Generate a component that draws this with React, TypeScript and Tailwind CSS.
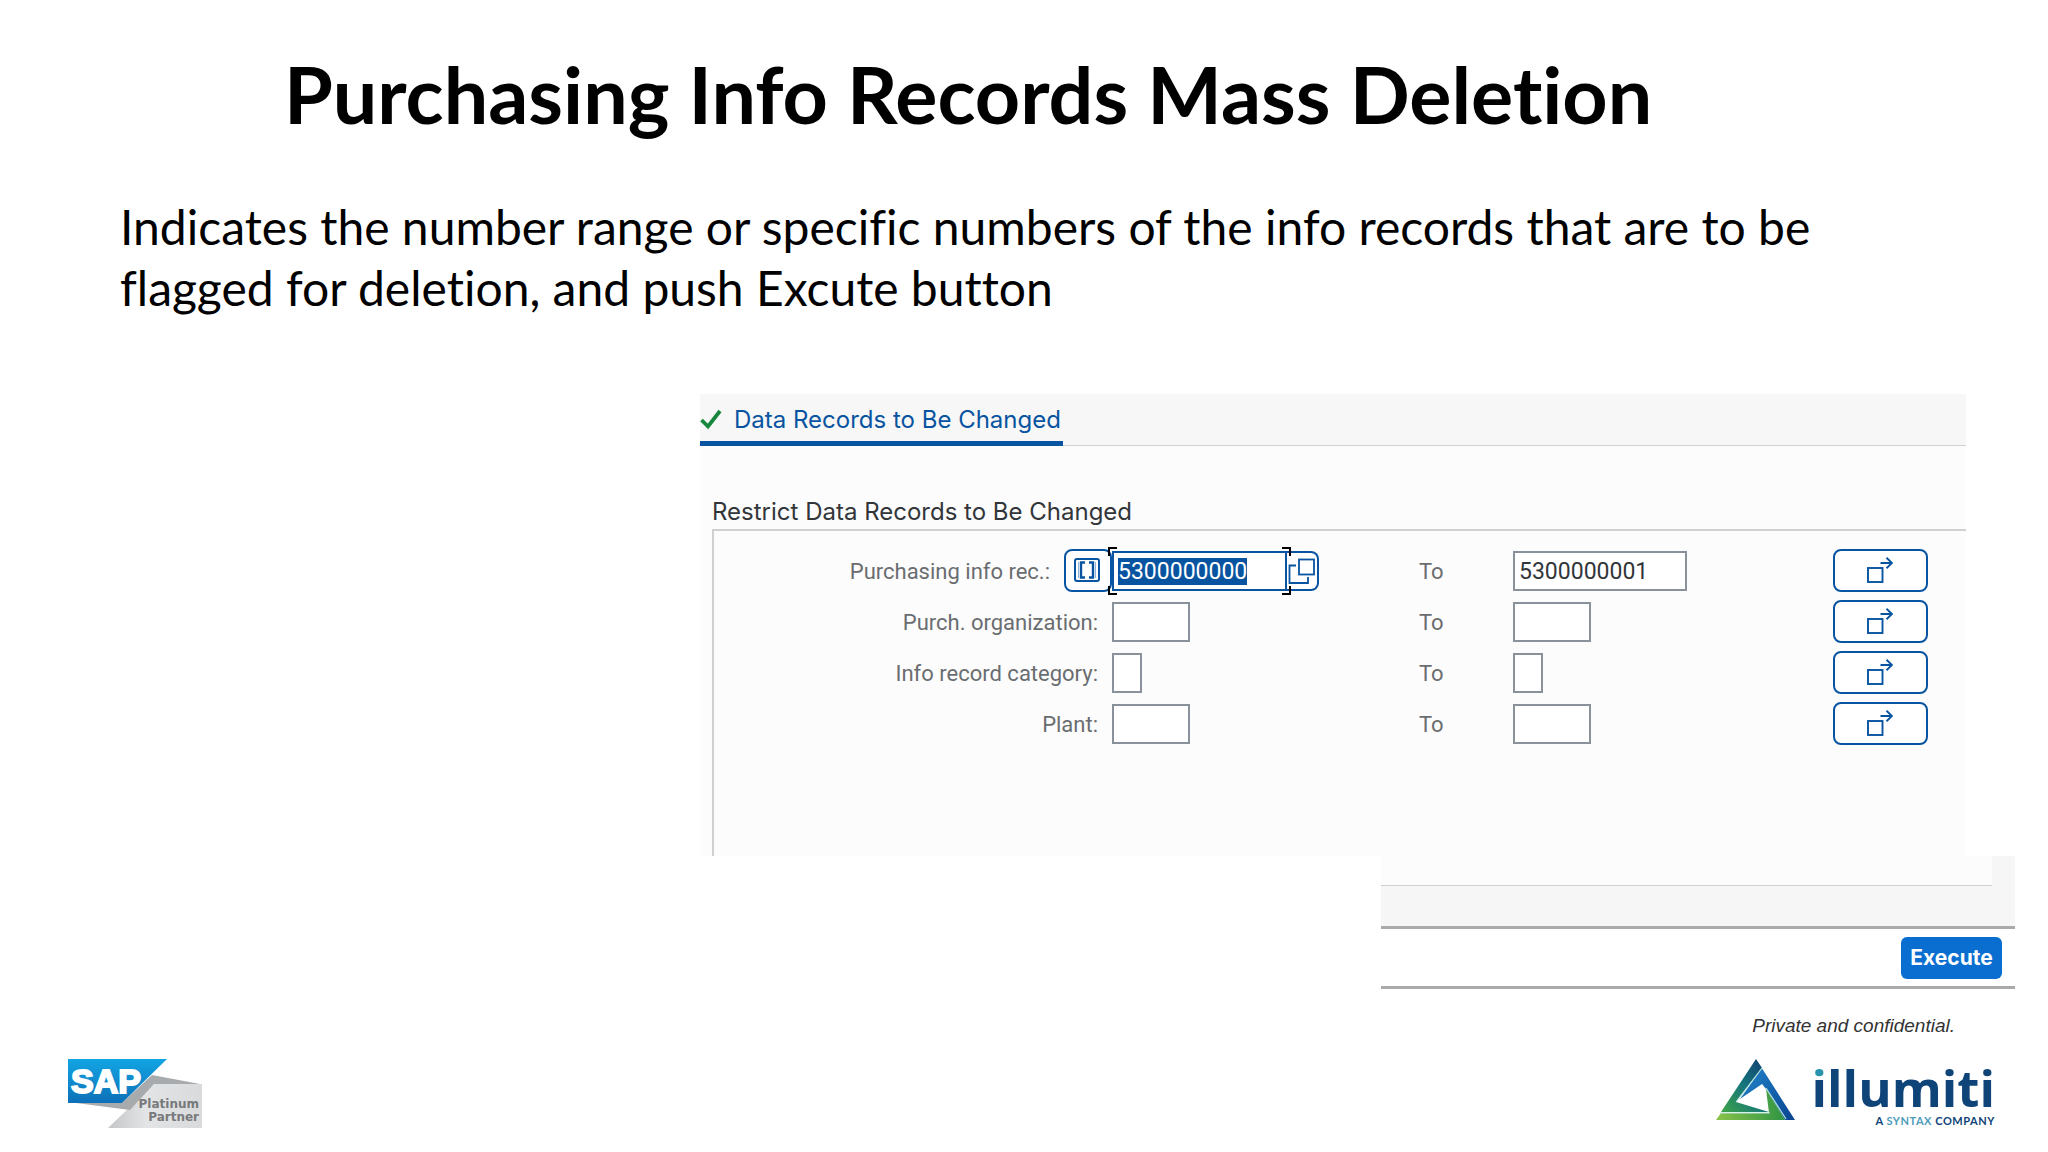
import React, { useEffect, useRef } from "react";

const rows = [
  { id: "info-rec", label: "Purchasing info rec.:", width: "w-[174px]", to: "5300000001" },
  { id: "org", label: "Purch. organization:", width: "w-[78px]", to: "" },
  { id: "category", label: "Info record category:", width: "w-[30px]", to: "" },
  { id: "plant", label: "Plant:", width: "w-[78px]", to: "" },
];

function CheckIcon() {
  return (
    <svg width="22" height="22" viewBox="0 0 22 22" fill="none">
      <path d="M1.5 11 8 17.5 20 2" stroke="#17873d" strokeWidth="3.8" />
    </svg>
  );
}

function BracketsIcon() {
  return (
    <svg width="26" height="24" viewBox="0 0 26 24" fill="none" stroke="#0854a0">
      <rect x="1" y="1" width="24" height="22" rx="2" strokeWidth="2" />
      <path d="M11 4.5H7V19.5H11M15 4.5H19V19.5H15" strokeWidth="2.4" />
      <path d="M4.5 4V20M21.5 4V20" stroke="#8fb4dc" strokeWidth="1" />
    </svg>
  );
}

function ValueHelpIcon() {
  return (
    <svg width="28" height="26" viewBox="0 0 28 26" fill="none" stroke="#0854a0" strokeWidth="1.8">
      <rect x="11" y="1.5" width="15" height="15" />
      <path d="M8 7.5H1.5V25H20V19" />
    </svg>
  );
}

function MultiSelectIcon() {
  return (
    <svg width="26" height="26" viewBox="0 0 26 26" fill="none" stroke="#0854a0" strokeWidth="1.9">
      <rect x="1" y="11" width="14.5" height="14" />
      <path d="M13.5 6H25M19.5 .8 25 6 19.5 11.2" />
    </svg>
  );
}

function RecordInput() {
  const inputRef = useRef<HTMLInputElement>(null);

  useEffect(() => {
    inputRef.current?.focus();
    inputRef.current?.select();
  }, []);

  return (
    <div className="flex items-center">
      <div className="relative">
        <input
          ref={inputRef}
          id="info-rec"
          defaultValue="5300000000"
          className="block h-10 w-[175px] border-2 border-[#0854a0] bg-white px-1 pt-0.5 text-[23px] leading-[26px] text-[#32363a] outline-none selection:bg-[#0854a0] selection:text-white"
        />
        <span className="absolute -left-1 -top-1 size-[9px] border-l-2 border-t-2 border-black" />
        <span className="absolute -bottom-1 -left-1 size-[9px] border-b-2 border-l-2 border-black" />
        <span className="absolute -right-1 -top-1 size-[9px] border-r-2 border-t-2 border-black" />
        <span className="absolute -bottom-1 -right-1 size-[9px] border-b-2 border-r-2 border-black" />
      </div>
      <button
        aria-label="Value help"
        className="flex h-10 w-8 items-center justify-center rounded-r-lg border-2 border-l-0 border-[#0854a0] bg-white"
      >
        <ValueHelpIcon />
      </button>
    </div>
  );
}

function SelectionForm() {
  return (
    <section className="ml-[700px] mr-[82px] h-[462px] bg-[#fcfcfc] font-['Roboto',sans-serif]">
      <div className="flex h-[52px] border-b border-[#d0d0d0] bg-[#f7f7f7]">
        <button className="flex h-[52px] items-center gap-3 border-b-[5px] border-[#0854a0] pt-1 pr-0.5 font-['Inter',sans-serif] text-[24px] text-[#0854a0]">
          <CheckIcon />
          Data Records to Be Changed
        </button>
      </div>
      <h2 className="ml-3 mt-[48px] h-[35px] font-['Inter',sans-serif] text-[24px] leading-[36px] text-[#32363a]">
        Restrict Data Records to Be Changed
      </h2>
      <div className="ml-3 flex h-[327px] flex-col gap-2 border-l-2 border-t-2 border-[#d0d0d0] pr-[38px] pt-[18px]">
        {rows.map((row, i) => (
          <div key={row.id} className="grid h-[43px] grid-cols-[398px_307px_94px_1fr_95px] items-center">
            <div className="flex items-center justify-end text-[22px] text-[#6a6d70]">
              <label htmlFor={row.id} className="pr-3.5 pt-0.5">
                {row.label}
              </label>
              {i === 0 && (
                <button
                  aria-label="Dynamic selection"
                  className="flex h-[43px] w-12 items-center justify-center rounded-lg border-2 border-[#0854a0] bg-white pb-0.5 pr-0.5"
                >
                  <BracketsIcon />
                </button>
              )}
            </div>
            {i === 0 ? (
              <RecordInput />
            ) : (
              <input id={row.id} className={`h-10 border-2 border-[#89919a] bg-white ${row.width}`} />
            )}
            <label htmlFor={`${row.id}-to`} className="pt-0.5 text-[22px] text-[#6a6d70]">
              To
            </label>
            <input
              id={`${row.id}-to`}
              defaultValue={row.to}
              className={`h-10 border-2 border-[#89919a] bg-white px-1 pt-0.5 text-[23px] text-[#32363a] ${row.width}`}
            />
            <button
              aria-label="Multiple selection"
              className="flex h-[43px] items-center justify-center rounded-lg border-2 border-[#0854a0] bg-white pb-0.5 pr-0.5"
            >
              <MultiSelectIcon />
            </button>
          </div>
        ))}
      </div>
    </section>
  );
}

function ExecuteBar() {
  return (
    <section className="ml-auto mr-[33px] w-[634px]">
      <div className="h-[70px] bg-[#f6f6f6] pr-[23px]">
        <div className="h-[30px] border-b border-[#d0d0d0] bg-[#fcfcfc]" />
      </div>
      <div className="flex h-[63px] items-center justify-end border-y-[3px] border-[#a9abab] pr-[13px]">
        <button className="h-[42px] w-[101px] rounded-md bg-[#0a6ed1] font-['Inter',sans-serif] text-[21px] font-bold text-white">
          Execute
        </button>
      </div>
    </section>
  );
}

function SapLogo() {
  return (
    <svg width="136" height="72" viewBox="0 0 136 72">
      <defs>
        <linearGradient id="sap" x1="0" y1="0" x2="0" y2="1">
          <stop offset="0" stopColor="#12a5e3" />
          <stop offset="1" stopColor="#0d70b8" />
        </linearGradient>
        <linearGradient id="platinum" x1="0" y1="0" x2="1" y2="0">
          <stop offset="0" stopColor="#c4c5c7" />
          <stop offset=".4" stopColor="#e3e4e5" />
          <stop offset="1" stopColor="#d9dadc" />
        </linearGradient>
      </defs>
      <path d="M40 70 86 26H134V70Z" fill="url(#platinum)" />
      <path d="M84 17 132 26H86L62 52 8 45H54Z" fill="#a8abad" />
      <path d="M0 1H99L54 45H0Z" fill="url(#sap)" />
      <text
        x="3"
        y="35"
        fontSize="34"
        fontWeight="700"
        fill="#fff"
        stroke="#fff"
        strokeWidth="2"
        fontFamily="Liberation Sans, sans-serif"
      >
        SAP
      </text>
      <text x="131" y="50" textAnchor="end" fontSize="12" fontWeight="700" fill="#77797b" fontFamily="DejaVu Sans, sans-serif">
        Platinum
      </text>
      <text x="131" y="63" textAnchor="end" fontSize="12" fontWeight="700" fill="#77797b" fontFamily="DejaVu Sans, sans-serif">
        Partner
      </text>
    </svg>
  );
}

function IllumitiLogo() {
  return (
    <div className="flex items-start">
      <svg width="79" height="62" viewBox="0 0 79 62">
        <defs>
          <linearGradient id="left" x1="1" y1="0" x2="0" y2="1">
            <stop offset="0" stopColor="#123a70" />
            <stop offset=".5" stopColor="#14747c" />
            <stop offset="1" stopColor="#3da447" />
          </linearGradient>
          <linearGradient id="right" x1="0" y1="0" x2="1" y2="1">
            <stop offset="0" stopColor="#2b8ed0" />
            <stop offset=".5" stopColor="#1467b0" />
            <stop offset="1" stopColor="#0c4490" />
          </linearGradient>
          <linearGradient id="base" x1="0" y1="0" x2="1" y2="0">
            <stop offset="0" stopColor="#8bc34a" />
            <stop offset="1" stopColor="#2f9444" />
          </linearGradient>
        </defs>
        {/* right bar behind, then the left bar and the base folded over it */}
        <path d="M40 0 79 61H69L50 30 46 25 24 40 46 9Z" fill="url(#right)" />
        <path d="M40 0 46 9 20 43 53 53H5Z" fill="url(#left)" />
        <path d="M50 30 69 61H0L5 54H53Z" fill="url(#base)" />
        <path d="M46 9 20 43M4 54H54M50 29 70 60" stroke="#b5e2dc" strokeWidth="1.2" />
      </svg>
      <div className="ml-4 flex flex-col items-end font-['Open_Sans',sans-serif] text-[#0e4478]">
        <div className="text-[51px] font-bold leading-[56px]">
          <span className="bg-linear-to-b from-[#2793ad] from-40% to-[#0e4478] to-40% bg-clip-text text-transparent">i</span>
          llumiti
        </div>
        <div className="font-['Lato',sans-serif] text-[11px] font-bold leading-3 tracking-wider">
          A <span className="text-[#4d9cba]">SYNTAX</span> COMPANY
        </div>
      </div>
    </div>
  );
}

export default function App() {
  return (
    <main className="min-h-screen bg-white text-black">
      <div className="h-[394px] font-['Lato',sans-serif] [font-variant-ligatures:no-common-ligatures]">
        <h1 className="pl-[284px] pt-[42px] text-[79px] font-bold leading-[104px]">
          Purchasing Info Records Mass Deletion
        </h1>
        <p className="ml-[120px] mr-[200px] mt-[50px] text-[48px] leading-[61px]">
          Indicates the number range or specific numbers of the info records that are to be
          <br />
          flagged for deletion, and push Excute button
        </p>
      </div>
      <SelectionForm />
      <ExecuteBar />
      <footer className="flex items-start justify-between pl-[68px] pr-[53px] pt-[25px]">
        <div className="pt-[44px]">
          <SapLogo />
        </div>
        <div>
          <p className="mb-[21px] mr-10 text-right font-['Liberation_Sans',sans-serif] text-[19px] italic leading-6 text-[#333]">
            Private and confidential.
          </p>
          <IllumitiLogo />
        </div>
      </footer>
    </main>
  );
}
